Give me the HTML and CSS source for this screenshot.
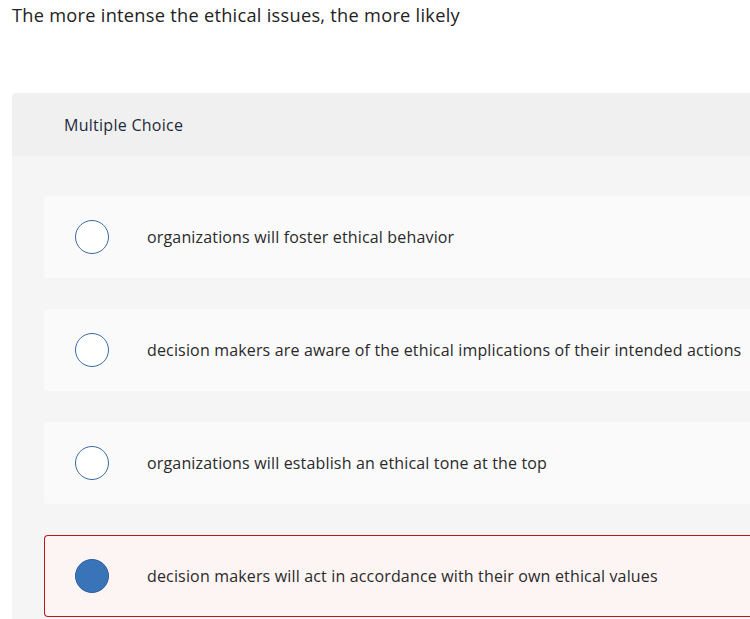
FILE: index.html
```html
<!DOCTYPE html>
<html>
<head>
<meta charset="utf-8">
<link rel="stylesheet" href="styles.css">
</head>
<body>
<div class="question">The more intense the ethical issues, the more likely</div>
<div class="panel">
  <div class="panel-header">Multiple Choice</div>
  <div class="panel-body">
    <div class="option"><span class="radio"></span><span class="label">organizations will foster ethical behavior</span></div>
    <div class="option"><span class="radio"></span><span class="label">decision makers are aware of the ethical implications of their intended actions</span></div>
    <div class="option"><span class="radio"></span><span class="label">organizations will establish an ethical tone at the top</span></div>
    <div class="option selected"><span class="radio"></span><span class="label">decision makers will act in accordance with their own ethical values</span></div>
  </div>
</div>
</body>
</html>
```
FILE: styles.css
```css
html { overflow: hidden; }
body {
  margin: 0;
  font-family: "Open Sans", "Liberation Sans", sans-serif;
  color: #222;
  background: #fff;
}
.question {
  padding: 3px 12px 0;
  height: 90px;
  font-size: 18.2px;
  letter-spacing: 0.28px;
  line-height: 24px;
  color: #222;
}
.panel {
  margin-left: 12px;
  border-radius: 4px 0 0 0;
  overflow: hidden;
}
.panel-header {
  height: 63px;
  background: #f0f0f0;
  display: flex;
  align-items: center;
  padding-left: 52px;
  font-size: 16px;
  letter-spacing: 0.27px;
  color: #1e2a3a;
}
.panel-body {
  background: #f5f5f5;
  padding: 40px 0 20px 32px;
  display: flex;
  flex-direction: column;
  gap: 31px;
}
.option {
  height: 80px;
  background: #fafafa;
  border: 1px solid transparent;
  border-right: none;
  border-radius: 4px 0 0 4px;
  display: flex;
  align-items: center;
  padding-left: 30px;
  gap: 38px;
  font-size: 16px;
  letter-spacing: 0.16px;
  line-height: 20px;
  color: #2a2a2a;
  white-space: nowrap;
}
.label { padding-bottom: 1px; }
.radio {
  width: 32px;
  height: 32px;
  border: 1.5px solid #3a6a9e;
  border-radius: 50%;
  background: #fff;
  flex: none;
}
.selected {
  border-color: #c2151b;
  background: #fdf4f4;
}
.selected .radio {
  background: #3a74b8;
  border-color: #2f5f94;
}
```
